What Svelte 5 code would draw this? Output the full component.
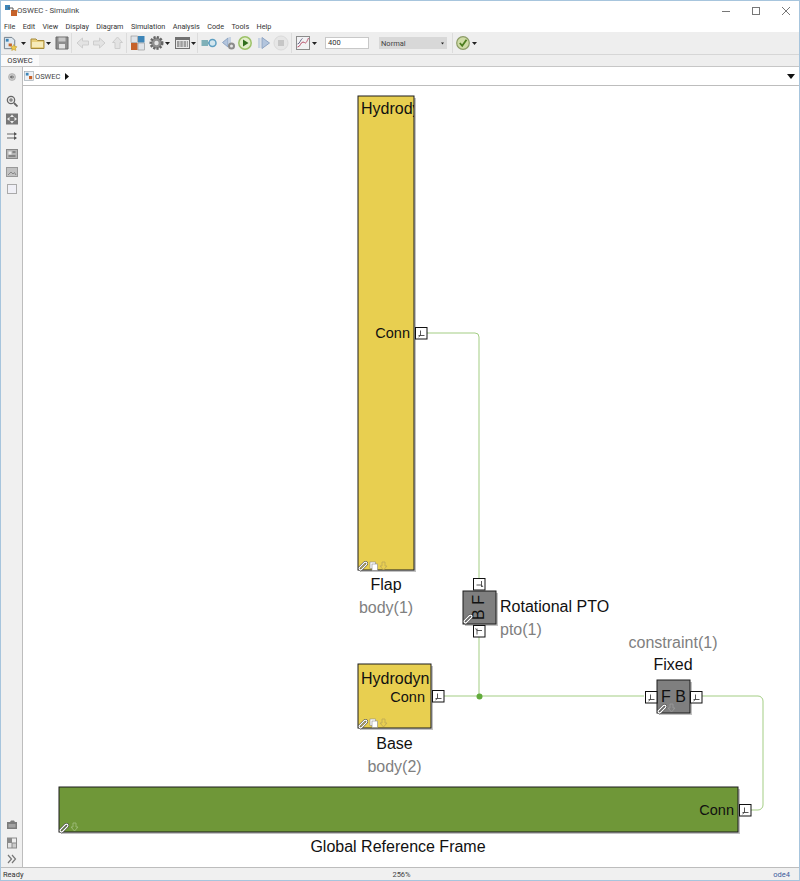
<script>
  const menus = ['File', 'Edit', 'View', 'Display', 'Diagram', 'Simulation', 'Analysis', 'Code', 'Tools', 'Help'];
</script>

{#snippet caret(cls)}
  <svg class="caret {cls}" width="7" height="5" viewBox="0 0 7 5"><path d="M1 1h5L3.500 4z" fill="#222"/></svg>
{/snippet}

{#snippet linkMark(x, y)}
  <g transform="translate({x} {y})">
    <path d="M1.500 7.500L6.500 2.500a1.400 1.400 0 0 1 2 2L3.500 9.500a1.400 1.400 0 0 1-2-2z" fill="none" stroke="#333" stroke-width="2.200"/>
    <path d="M1.500 7.500L6.500 2.500a1.400 1.400 0 0 1 2 2L3.500 9.500a1.400 1.400 0 0 1-2-2z" fill="none" stroke="#fff" stroke-width="1.200"/>
  </g>
{/snippet}
{#snippet copyMark(x, y)}
  <g transform="translate({x} {y})">
    <rect x="0" y="0" width="5.500" height="6.500" fill="#fff" stroke="#888" stroke-width=".6"/>
    <rect x="2" y="2" width="5.500" height="6.500" fill="#fff" stroke="#888" stroke-width=".6"/>
  </g>
{/snippet}
{#snippet maskMark(x, y, col)}
  <path transform="translate({x} {y})" d="M2 0h3v4h2L3.500 8 0 4h2z" fill="none" stroke={col} stroke-width=".9"/>
{/snippet}
{#snippet port(x, y, rot)}
  <g transform="translate({x} {y})">
    <rect x=".5" y=".5" width="11.500" height="11.500" fill="#fff" stroke="#111"/>
    <path d="M3.500 8.500h6M5.500 8.500V3.500M5.500 8.500l-2 1.500" transform="rotate({rot} 6.250 6.250)" fill="none" stroke="#444" stroke-width=".9"/>
  </g>
{/snippet}

<div class="window">
  <header class="title">
    <svg width="12" height="13" viewBox="0 0 12 13">
      <rect x="0" y="1" width="5" height="5" fill="#3d85b8"/>
      <rect x="6" y="6" width="6" height="6" fill="#c6622a"/>
      <path d="M3 4h5v3" fill="none" stroke="#555"/>
    </svg>
    <span class="title-text">OSWEC - Simulink</span>
    <div class="winbtns">
      <svg width="10" height="10" viewBox="0 0 10 10"><path d="M1 5.500h8" stroke="#777"/></svg>
      <svg width="10" height="10" viewBox="0 0 10 10"><rect x="1.500" y="1.500" width="7" height="7" fill="none" stroke="#777"/></svg>
      <svg width="10" height="10" viewBox="0 0 10 10"><path d="M1 1l8 8M9 1l-8 8" stroke="#777"/></svg>
    </div>
  </header>

  <nav class="menu">
    {#each menus as m}<span>{m}</span>{/each}
  </nav>

  <div class="toolbar">
    <svg width="15" height="15" viewBox="0 0 16 16">
      <path d="M1.500 1.500h8l3 3v9h-11z" fill="#dfe8ef" stroke="#6f7c88"/>
      <rect x="3" y="3" width="3" height="3" fill="#3d85b8"/>
      <rect x="6" y="8" width="3.500" height="3" fill="#c6682c"/>
      <path d="M11.500 9l1.200 2.200 2.300.3-1.700 1.600.4 2.400-2.200-1.100-2.200 1.100.4-2.400-1.700-1.600 2.300-.3z" fill="#eec94b" stroke="#b58f22" stroke-width=".5"/>
    </svg>
    {@render caret('m2')}
    <svg class="m3" width="15" height="16" viewBox="0 0 15 16">
      <path d="M1 4h5l1.500 1.500H14v8H1z" fill="#e9cf7c" stroke="#a58a3c"/>
      <path d="M2 7h11v5H2z" fill="#f7ebb9"/>
    </svg>
    {@render caret('m0')}
    <svg class="m3" width="14" height="16" viewBox="0 0 14 16">
      <path d="M1 2h12v12H1z" fill="#8d8d8d" stroke="#6a6a6a"/>
      <rect x="3.500" y="2.500" width="7" height="4" fill="#c7c7c7"/>
      <rect x="4" y="9" width="6" height="4.500" fill="#e3e3e3"/>
    </svg>
    <i class="sep m2"></i>
    <svg class="m4" width="13" height="16" viewBox="0 0 13 16"><path d="M1 8l5.500-5v3h6v4h-6v3z" fill="#e3e3e3" stroke="#cdcdcd"/></svg>
    <svg class="m4" width="13" height="16" viewBox="0 0 13 16"><path d="M12 8L6.500 3v3h-6v4h6v3z" fill="#e3e3e3" stroke="#cdcdcd"/></svg>
    <svg class="m6" width="11" height="16" viewBox="0 0 11 16"><path d="M5.500 2l5 5.500H8v6H3v-6H.5z" fill="#e3e3e3" stroke="#cdcdcd"/></svg>
    <i class="sep m3"></i>
    <svg class="m3" width="16" height="16" viewBox="0 0 16 16">
      <rect x="1" y="1" width="6.500" height="6.500" fill="#dfe3e8" stroke="#7d7d7d" stroke-width=".5"/>
      <rect x="8" y="1" width="6.500" height="6.500" fill="#3d85b8"/>
      <rect x="1" y="8" width="6.500" height="7" fill="#c6622a"/>
      <rect x="8" y="8" width="6.500" height="7" fill="#dfe3e8" stroke="#7d7d7d" stroke-width=".5"/>
    </svg>
    <svg class="m3" width="15" height="16" viewBox="0 0 15 16">
      <circle cx="7.500" cy="8" r="5.500" fill="#8a8a8a" stroke="#666" stroke-width="3" stroke-dasharray="2 1.200"/>
      <circle cx="7.500" cy="8" r="4.400" fill="#8f8f8f"/>
      <circle cx="7.500" cy="8" r="2.200" fill="#e4e4e4"/>
    </svg>
    {@render caret('m0')}
    <svg class="m4" width="15" height="16" viewBox="0 0 15 16">
      <rect x=".5" y="2.500" width="14" height="11" fill="#e9e9e9" stroke="#707070"/>
      <rect x=".5" y="2.500" width="14" height="2.500" fill="#707070"/>
      <path d="M2 7h11M2 9h11M2 11h11" stroke="#555" stroke-dasharray="2.500 .8"/>
    </svg>
    {@render caret('m0')}
    <i class="sep m0"></i>
    <svg class="m3" width="16" height="16" viewBox="0 0 16 16">
      <rect x=".5" y="5" width="6.500" height="6" fill="#7fb0b8"/>
      <path d="M7 8h3" stroke="#7fb0b8" stroke-width="2"/>
      <circle cx="11.500" cy="8" r="3.500" fill="#d3e6ee" stroke="#5e9fc2" stroke-width="1.500"/>
    </svg>
    <svg class="m4" width="15" height="16" viewBox="0 0 15 16">
      <path d="M7 3v9L1.500 7.500z" fill="#b3c5dd" stroke="#8ea5c4"/>
      <rect x="7.500" y="2" width="2.500" height="10" fill="#c6d2e2"/>
      <circle cx="10.500" cy="11" r="3.500" fill="#8b8b8b"/>
      <circle cx="10.500" cy="11" r="1.500" fill="#e6e6e6"/>
    </svg>
    <svg class="m2" width="14" height="16" viewBox="0 0 14 16">
      <circle cx="7" cy="8" r="6.200" fill="#e3eecb" stroke="#9cc268" stroke-width="1.500"/>
      <path d="M5 4.500v7L10.500 8z" fill="#2f6e1c"/>
    </svg>
    <svg class="m5" width="14" height="16" viewBox="0 0 14 16">
      <rect x="1" y="3" width="2.500" height="10" fill="#c6d2e2"/>
      <path d="M5 2.500v11L12.500 8z" fill="#b3c5dd" stroke="#8ea5c4"/>
    </svg>
    <svg class="m2" width="16" height="16" viewBox="0 0 16 16">
      <circle cx="8" cy="8" r="7" fill="#e6e6e6" stroke="#dadada"/>
      <rect x="5" y="5" width="6" height="6" fill="#c6c6c6"/>
    </svg>
    <i class="sep m2"></i>
    <svg class="m4" width="14" height="16" viewBox="0 0 14 16">
      <rect x=".5" y="1.500" width="13" height="13" fill="#f2f2f4" stroke="#8c8c8c"/>
      <path d="M1.500 12c3 0 3-5 5.500-5s2 4 5.500-4" fill="none" stroke="#b8506a"/>
      <path d="M1.500 9c2.500 0 3-5 5-5.500" fill="none" stroke="#6a6a8a"/>
    </svg>
    {@render caret('m1')}
    <span class="stoptime">400</span>
    <span class="mode">Normal{@render caret('m0')}</span>
    <i class="sep m5"></i>
    <svg class="m3" width="14" height="16" viewBox="0 0 14 16">
      <circle cx="7" cy="8" r="6.300" fill="#cfdca6" stroke="#8c9c66" stroke-width="1.200"/>
      <path d="M3.800 8l2.400 2.800L10.500 4.800" fill="none" stroke="#4c7d1f" stroke-width="1.800"/>
    </svg>
    {@render caret('m1')}
  </div>

  <div class="tabs"><span class="tab">OSWEC</span></div>

  <div class="crumbrow">
    <div class="crumbside">
      <svg width="8" height="8" viewBox="0 0 8 8"><circle cx="4" cy="4" r="3.500" fill="#c9c9c9" stroke="#999" stroke-width=".5"/><path d="M6 4H2.500M4 2.500L2.500 4 4 5.500" fill="none" stroke="#333" stroke-width=".7"/></svg>
    </div>
    <div class="crumb">
      <svg width="10" height="10" viewBox="0 0 11 11">
        <rect x=".5" y=".5" width="10" height="10" fill="#eef2f6" stroke="#9aa4ae" stroke-width=".7"/>
        <rect x="2" y="2" width="3" height="3" fill="#3d85b8"/>
        <rect x="5.500" y="5.500" width="3.500" height="3.500" fill="#c6622a"/>
      </svg>
      <span class="crumbtext">OSWEC</span>
      <svg class="crumbarrow" width="4" height="7" viewBox="0 0 4 7"><path d="M0 0l4 3.500L0 7z" fill="#111"/></svg>
      <svg class="crumbdrop" width="8" height="5" viewBox="0 0 8 5"><path d="M0 0h8L4 5z" fill="#111"/></svg>
    </div>
  </div>

  <main class="body">
    <aside class="side">
      <div class="sidegroup">
        <svg width="12" height="12" viewBox="0 0 12 12"><circle cx="5" cy="5" r="3.700" fill="#e3e3e3" stroke="#666" stroke-width="1.200"/><path d="M8 8l3.500 3.500" stroke="#666" stroke-width="1.800"/><path d="M3 5h4M5 3v4" stroke="#555" stroke-width=".8"/></svg>
        <svg width="12" height="12" viewBox="0 0 12 12"><rect width="12" height="11" y=".5" fill="#777"/><path d="M6 1.500l2 2.500H4zM6 10.500l2-2.500H4zM1 6l2.500-2v4zM11 6L8.500 4v4z" fill="#eee"/></svg>
        <svg width="12" height="12" viewBox="0 0 12 12"><path d="M1 4h9M1 8h9" stroke="#666"/><path d="M8 2l3 2-3 2zM8 6l3 2-3 2z" fill="#555"/></svg>
        <svg width="12" height="12" viewBox="0 0 12 12"><rect x=".5" y="1.500" width="11" height="9" fill="#b5b5b5" stroke="#888"/><rect x="2.500" y="3.500" width="3" height="3" fill="#eee"/><path d="M6.500 4h3M2.500 8h7" stroke="#555"/></svg>
        <svg width="12" height="12" viewBox="0 0 12 12"><rect x=".5" y="1.500" width="11" height="9" fill="#c2c2c2" stroke="#999"/><path d="M2 9l3-3 2 2 1.500-1.500L10 9" fill="none" stroke="#888"/></svg>
        <svg width="12" height="12" viewBox="0 0 12 12"><rect x="1.500" y="1.500" width="9" height="9" fill="#f0f0f6" stroke="#aaa"/></svg>
      </div>
      <div class="sidegroup bottom">
        <svg width="12" height="12" viewBox="0 0 12 12"><path d="M1 3h3l1-1.500h3L9 3h2v7H1z" fill="#7c7c7c"/><rect x="2.500" y="5" width="7" height="3.500" fill="#a3a3a3"/></svg>
        <svg width="12" height="12" viewBox="0 0 12 12"><rect x="1" y=".5" width="10" height="11" fill="#8a8a8a"/><rect x="6" y="1.500" width="4" height="4" fill="#eee"/><rect x="2" y="6" width="3.500" height="4.500" fill="#e3e3e3"/><rect x="6.500" y="6.500" width="3.500" height="4" fill="#ccc"/></svg>
        <svg width="10" height="10" viewBox="0 0 10 10"><path d="M1 1l3.500 4L1 9M5 1l3.500 4L5 9" fill="none" stroke="#777" stroke-width="1.200"/></svg>
      </div>
    </aside>

    <div class="canvas">
      <svg class="diagram" width="776" height="781" viewBox="23 86 776 781">
        <defs>
          <clipPath id="flapclip"><rect x="358" y="96" width="56" height="60"/></clipPath>
          <clipPath id="baseclip"><rect x="358" y="664" width="73" height="40"/></clipPath>
        </defs>

        <g class="wires">
          <path d="M427 333H475a4 4 0 0 1 4 4V578"/>
          <path d="M479 637V696"/>
          <path d="M444 696H644"/>
          <path d="M702 696H758a5 5 0 0 1 5 5V805a5 5 0 0 1-5 5H751"/>
        </g>
        <circle cx="479.500" cy="696.500" r="3" fill="#62ab3c"/>

        <rect class="shadow" x="360" y="98" width="56" height="474"/>
        <rect class="yellow" x="358" y="96" width="56" height="474"/>
        <text class="lbl" x="361" y="114" clip-path="url(#flapclip)">Hydrodyn</text>
        <text class="lbl conn" x="410" y="338">Conn</text>
        {@render port(415, 327, 0)}
        {@render linkMark(358, 560)}
        {@render copyMark(370, 562)}
        {@render maskMark(380, 562, '#c2ad55')}
        <text class="lbl mid" x="386" y="589.500">Flap</text>
        <text class="lbl mid gray" x="386" y="613">body(1)</text>

        <rect class="shadow" x="360" y="666" width="73" height="64"/>
        <rect class="yellow" x="358" y="664" width="73" height="64"/>
        <text class="lbl" x="361" y="684" clip-path="url(#baseclip)">Hydrodyn</text>
        <text class="lbl conn" x="425" y="702">Conn</text>
        {@render port(432, 690, 0)}
        {@render linkMark(358, 718)}
        {@render copyMark(370, 719)}
        {@render maskMark(380, 719, '#c2ad55')}
        <text class="lbl mid" x="394.500" y="749">Base</text>
        <text class="lbl mid gray" x="394.500" y="772">body(2)</text>

        <rect class="shadow" x="465" y="593" width="33" height="33"/>
        <rect class="grayblock" x="463" y="591" width="33" height="33"/>
        {@render port(473, 578, 270)}
        {@render port(473, 625, 90)}
        <text class="lbl mid" transform="translate(484 607.500) rotate(-90)">B F</text>
        {@render linkMark(463, 613)}
        <text class="lbl" x="500" y="612">Rotational PTO</text>
        <text class="lbl gray" x="500" y="635">pto(1)</text>

        <rect class="shadow" x="659" y="682" width="33" height="33"/>
        <rect class="grayblock" x="657" y="680" width="33" height="33"/>
        {@render port(645, 691, 0)}
        {@render port(690, 691, 0)}
        <text class="lbl mid" x="673.500" y="702">F B</text>
        {@render linkMark(657, 703)}
        {@render maskMark(668, 704, '#999')}
        <text class="lbl mid gray" x="673" y="648">constraint(1)</text>
        <text class="lbl mid" x="673" y="670">Fixed</text>

        <rect class="shadow" x="61" y="789" width="679" height="45"/>
        <rect class="greenblock" x="59" y="787" width="679" height="45"/>
        <text class="lbl conn" x="734" y="814.500">Conn</text>
        {@render port(739, 804, 0)}
        {@render linkMark(59, 822)}
        {@render maskMark(71, 823, '#9dbb78')}
        <text class="lbl mid" x="398" y="851.500">Global Reference Frame</text>
      </svg>
    </div>
  </main>

  <footer class="status">
    <span class="ready">Ready</span>
    <span class="zoom">256%</span>
    <span class="solver">ode4</span>
  </footer>
</div>

<style>
  :global(body) { margin: 0; background: #fff; }
  .window {
    width: 800px;
    height: 881px;
    box-sizing: border-box;
    border: 1px solid #a7c5dd;
    display: flex;
    flex-direction: column;
    font-family: Roboto, "Noto Sans", sans-serif;
    font-size: 7.250px;
    color: #333;
    background: #f0f0f0;
    overflow: hidden;
  }
  .title {
    height: 19px;
    flex: none;
    background: #fff;
    display: flex;
    align-items: center;
    padding-left: 4px;
    box-sizing: border-box;
  }
  .title-text { font-size: 7.800px; color: #444; }
  .winbtns {
    margin-left: auto;
    padding-right: 8px;
    display: flex;
    gap: 20px;
  }
  .menu {
    height: 12px;
    flex: none;
    background: #fff;
    display: flex;
    align-items: center;
    gap: 7.400px;
    padding-left: 3px;
    color: #333;
  }
  .toolbar {
    height: 23px;
    flex: none;
    box-sizing: border-box;
    background: #eee;
    border-bottom: 1px solid #d6d6d6;
    display: flex;
    align-items: center;
    padding-left: 2px;
  }
  .toolbar svg { flex: none; }
  .m0 { margin-left: 0; }
  .m1 { margin-left: 1px; }
  .m2 { margin-left: 2px; }
  .m3 { margin-left: 3px; }
  .m4 { margin-left: 4px; }
  .m5 { margin-left: 5px; }
  .m6 { margin-left: 6px; }
  .caret { flex: none; }
  .sep {
    width: 1px;
    height: 20px;
    background: #dcdcdc;
    flex: none;
  }
  .stoptime {
    width: 44px;
    height: 12px;
    box-sizing: border-box;
    margin-left: 7px;
    border: 1px solid #c8c8c8;
    background: #fff;
    padding-left: 2px;
    line-height: 10px;
    font-size: 7.500px;
    color: #333;
  }
  .mode {
    width: 68px;
    height: 12px;
    box-sizing: border-box;
    margin-left: 10px;
    background: #d8d8d8;
    padding: 0 1px 0 2px;
    display: flex;
    align-items: center;
    justify-content: space-between;
    font-size: 7.500px;
    color: #444;
  }
  .mode .caret { transform: scale(.6); }
  .tabs {
    height: 12px;
    flex: none;
    background: #eee;
    display: flex;
    border-bottom: 1px solid #c6c6c6;
    box-sizing: border-box;
  }
  .tab {
    width: 38px;
    height: 11px;
    background: #fafafa;
    text-align: center;
    line-height: 12px;
    font-size: 7.500px;
    color: #333;
  }
  .crumbrow { height: 19px; flex: none; display: flex; }
  .crumbside {
    width: 21px;
    flex: none;
    display: flex;
    align-items: center;
    justify-content: center;
    background: #f0f0f0;
  }
  .crumb {
    flex: 1;
    background: #fff;
    border-left: 1px solid #bdbdbd;
    border-bottom: 1px solid #bdbdbd;
    display: flex;
    align-items: center;
    padding-left: 1px;
  }
  .crumbtext { margin-left: 1px; font-size: 7.500px; color: #444; }
  .crumbarrow { margin-left: 5px; }
  .crumbdrop { margin-left: auto; margin-right: 4px; }
  .body { flex: 1; display: flex; min-height: 0; }
  .side {
    width: 21px;
    flex: none;
    display: flex;
    flex-direction: column;
    justify-content: space-between;
    align-items: center;
    padding: 9px 0 3px;
    box-sizing: border-box;
    background: #f0f0f0;
  }
  .sidegroup {
    display: flex;
    flex-direction: column;
    align-items: center;
    gap: 5.700px;
  }
  .sidegroup.bottom { gap: 5.500px; }
  .canvas {
    flex: 1;
    background: #fff;
    border-left: 1px solid #bdbdbd;
    min-width: 0;
    overflow: hidden;
  }
  .diagram { display: block; }
  .wires path {
    fill: none;
    stroke: #a3cd83;
    stroke-width: 1;
  }
  .shadow { fill: #9a9a9a; opacity: .6; }
  .yellow { fill: #e8cf50; stroke: #1c1c1c; stroke-width: 1; }
  .grayblock { fill: #7f7f7f; stroke: #1c1c1c; stroke-width: 1; }
  .greenblock { fill: #6f9738; stroke: #1c1c1c; stroke-width: 1; }
  .lbl {
    font-family: "Liberation Sans", Arial, sans-serif;
    font-size: 16px;
    fill: #111;
  }
  .conn { text-anchor: end; font-size: 14.500px; }
  .mid { text-anchor: middle; }
  .gray { fill: #808080; }
  .status {
    height: 13px;
    flex: none;
    box-sizing: border-box;
    background: #f0f0f0;
    border-top: 1px solid #bdbdbd;
    display: grid;
    grid-template-columns: 1fr auto 1fr;
    align-items: center;
    padding: 0 9px 0 2px;
    font-size: 7.500px;
  }
  .zoom { color: #444; margin-left: 10px; }
  .solver { justify-self: end; color: #3c5a9c; }
</style>
